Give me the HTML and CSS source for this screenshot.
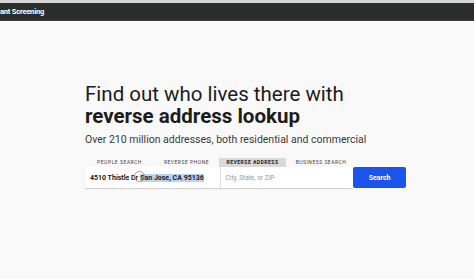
FILE: index.html
```html
<!DOCTYPE html>
<html lang="en">
<head>
    <meta charset="UTF-8">
    <title>Reverse Address Lookup</title>
    <link rel="stylesheet" href="styles.css">
</head>
<body>

<div class="topbar">
    <span class="brand">ant Screening</span>
</div>

<div class="hero">
    <h1>Find out who lives there with<br><strong>reverse address lookup</strong></h1>
    <p class="sub">Over 210 million addresses, both residential and commercial</p>

    <!-- Pestañas de búsqueda -->
    <div class="tabs">
        <span class="tab">PEOPLE SEARCH</span>
        <span class="tab">REVERSE PHONE</span>
        <span class="tab active">REVERSE ADDRESS</span>
        <span class="tab">BUSINESS SEARCH</span>
    </div>

    <div class="search">
        <div class="field street">4510 Thistle Dr <span class="sel">San Jose, CA 95136</span><span class="cursor"></span></div>
        <div class="field city">City, State, or ZIP</div>
        <button class="btn">Search</button>
    </div>
</div>

</body>
</html>
```

FILE: styles.css
```css
body {
    margin: 0;
    font-family: Roboto, "Liberation Sans", Arial, sans-serif;
    background-color: #f9f9f9;
    color: #222;
    height: 279px;
    border-top: 3px solid #d6d6d6;
    box-sizing: border-box;
}
.topbar {
    background-color: #2b2d2d;
    height: 17px;
    display: flex;
    align-items: center;
    border-bottom: 1px solid #3a3c3c;
}
.brand {
    color: #fff;
    font-weight: bold;
    font-size: 7.5px;
    letter-spacing: -0.2px;
}
.hero {
    padding: 62px 0 0 85px;
}
h1 {
    margin: 0;
    font-size: 20.5px;
    font-weight: 400;
    line-height: 22px;
    color: #1c1c1c;
}
h1 strong {
    font-weight: bold;
}
.sub {
    margin: 6px 0 0;
    font-size: 10.5px;
    line-height: 13px;
    color: #3a3a3a;
}
.tabs {
    display: flex;
    margin-top: 12px;
    font-size: 5px;
    line-height: 7px;
    letter-spacing: 0.5px;
    color: #444;
}
.tab {
    padding: 1px 0;
    text-align: center;
}
.tab:nth-child(1) { width: 69px; }
.tab:nth-child(2) { width: 65px; }
.tab:nth-child(3) { width: 67px; }
.tab:nth-child(4) { width: 70px; }
.tab.active {
    background-color: #d9d9d9;
    color: #222;
    font-weight: bold;
}
.search {
    display: flex;
    height: 21px;
    width: 321px;
}
.field {
    background-color: #fff;
    font-size: 7px;
    display: flex;
    align-items: center;
    padding-left: 5px;
    box-shadow: 0 1px 1px rgba(0,0,0,0.15);
    position: relative;
}
.street {
    width: 130px;
    font-weight: bold;
    color: #222;
    border-right: 1px solid #e2e2e2;
}
.sel {
    background-color: #b9d3f3;
    margin-left: 2px;
}
.cursor {
    position: absolute;
    left: 49px;
    top: 4px;
    width: 11px;
    height: 11px;
    border: 1px solid #e08060;
    border-radius: 50%;
    box-sizing: border-box;
}
.city {
    width: 128px;
    font-size: 6.5px;
    color: #999;
}
.btn {
    width: 53px;
    background-color: #1a54ea;
    color: #fff;
    border: none;
    border-radius: 2px;
    font-family: inherit;
    font-size: 7px;
    font-weight: bold;
    padding: 0;
}
```
